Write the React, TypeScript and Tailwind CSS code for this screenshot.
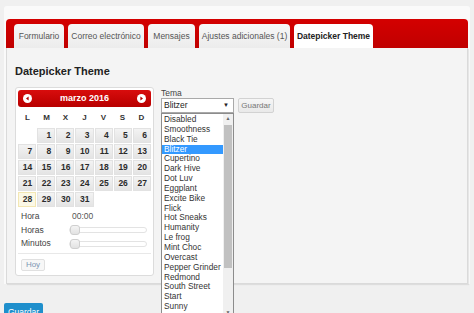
import React from "react";

const TABS = [
  { label: "Formulario", w: "w-[50px]" },
  { label: "Correo electrónico", w: "w-[76px]" },
  { label: "Mensajes", w: "w-[47px]" },
  { label: "Ajustes adicionales (1)", w: "w-[91px]" },
];

const DAY_NAMES = ["L", "M", "X", "J", "V", "S", "D"];

const WEEKS: (number | null)[][] = [
  [null, 1, 2, 3, 4, 5, 6],
  [7, 8, 9, 10, 11, 12, 13],
  [14, 15, 16, 17, 18, 19, 20],
  [21, 22, 23, 24, 25, 26, 27],
  [28, 29, 30, 31, null, null, null],
];

const THEMES = [
  "Disabled",
  "Smoothness",
  "Black Tie",
  "Blitzer",
  "Cupertino",
  "Dark Hive",
  "Dot Luv",
  "Eggplant",
  "Excite Bike",
  "Flick",
  "Hot Sneaks",
  "Humanity",
  "Le frog",
  "Mint Choc",
  "Overcast",
  "Pepper Grinder",
  "Redmond",
  "South Street",
  "Start",
  "Sunny",
];

function CircleArrow({ dir }: { dir: "left" | "right" }) {
  return (
    <svg width="9" height="9" viewBox="0 0 9 9">
      <circle cx="4.5" cy="4.5" r="4.5" fill="#fff" />
      {dir === "left" ? (
        <path d="M5.6 2.4 L3 4.5 L5.6 6.6 Z" fill="#b30000" />
      ) : (
        <path d="M3.4 2.4 L6 4.5 L3.4 6.6 Z" fill="#b30000" />
      )}
    </svg>
  );
}

function Slider() {
  return (
    <div className="relative h-[6px] w-[78px] rounded-[3px] border border-[#e3e3e3] bg-white">
      <span className="absolute left-0 top-[-3px] h-[10px] w-[10px] rounded-[3px] border border-[#cfcfcf] bg-gradient-to-b from-[#f4f4f4] to-[#e2e2e2]" />
    </div>
  );
}

function Calendar() {
  return (
    <div className="w-[139px] rounded-[3px] border border-[#dcdcdc] bg-white p-[2px]">
      <div className="flex h-[17px] items-center justify-between rounded-[3px] bg-gradient-to-b from-[#d80d0d] to-[#b80000] px-[5px]">
        <CircleArrow dir="left" />
        <span className="text-[9px] font-bold text-white">marzo 2016</span>
        <CircleArrow dir="right" />
      </div>
      <div className="grid h-[21px] grid-cols-7 items-center">
        {DAY_NAMES.map((d) => (
          <span key={d} className="text-center text-[8px] font-bold text-[#333]">
            {d}
          </span>
        ))}
      </div>
      <div className="grid grid-cols-7 gap-[1px]">
        {WEEKS.flat().map((d, i) =>
          d === null ? (
            <span key={i} className="h-[15px]" />
          ) : (
            <span
              key={i}
              className={
                d === 28
                  ? "flex h-[15px] items-center justify-end border border-[#f3e7b3] bg-[#fbf8e6] pr-[3px] text-[8.5px] font-bold text-[#333]"
                  : "flex h-[15px] items-center justify-end border border-[#e2e2e2] bg-gradient-to-b from-[#f3f3f3] to-[#e4e4e4] pr-[3px] text-[8.5px] font-bold text-[#2b2b2b]"
              }
            >
              {d}
            </span>
          ),
        )}
      </div>
      <div className="mt-[2px] px-[3px] text-[8.5px] text-[#444]">
        <div className="flex h-[14px] items-center">
          <span className="w-[51px]">Hora</span>
          <span className="text-[#555]">00:00</span>
        </div>
        <div className="flex h-[14px] items-center">
          <span className="w-[48px]">Horas</span>
          <Slider />
        </div>
        <div className="flex h-[13px] items-center">
          <span className="w-[48px]">Minutos</span>
          <Slider />
        </div>
      </div>
      <div className="mt-[3px] border-t border-[#e8e8e8] px-[3px] pb-[2px] pt-[5px]">
        <span className="flex h-[12px] w-[24px] items-center justify-center rounded-[2px] border border-[#e0e0e0] bg-[#f7f7f7] text-[8px] text-[#7d96b4]">
          Hoy
        </span>
      </div>
    </div>
  );
}

function ThemeSelect() {
  return (
    <div className="relative pl-[7px] pt-[1px]">
      <div className="h-[10px] text-[8.5px] leading-[10px] text-[#444]">Tema</div>
      <div className="flex items-center gap-[4px]">
        <div className="flex h-[15px] w-[73px] items-center justify-between border border-[#a9a9a9] bg-white pl-[2px] pr-[4px] text-[8.5px] text-[#222]">
          <span>Blitzer</span>
          <span className="text-[6px] text-[#222]">▼</span>
        </div>
        <div className="flex h-[15px] w-[36px] items-center justify-center rounded-[2px] border border-[#d2d2d2] bg-gradient-to-b from-[#f6f6f6] to-[#e9e9e9] text-[8px] text-[#777]">
          Guardar
        </div>
      </div>
      <div className="absolute left-[7px] top-[26px] flex h-[205px] w-[73px] border border-[#8c8c8c] bg-white">
        <ul className="min-w-0 flex-1 overflow-hidden pt-[1px] text-[8.3px] leading-[9.85px] text-[#333]">
          {THEMES.map((t) => (
            <li
              key={t}
              className={
                t === "Blitzer"
                  ? "whitespace-nowrap bg-[#3399ff] pl-[2px] text-white"
                  : "whitespace-nowrap pl-[2px]"
              }
            >
              {t}
            </li>
          ))}
        </ul>
        <div className="flex w-[10px] shrink-0 flex-col items-center bg-[#f0f0f0]">
          <span className="h-[9px] text-[5px] leading-[9px] text-[#666]">▲</span>
          <span className="mt-[2px] h-[143px] w-[8px] bg-[#c1c1c1]" />
          <span className="flex-1" />
          <span className="h-[9px] text-[5px] leading-[9px] text-[#666]">▼</span>
        </div>
      </div>
    </div>
  );
}

export default function App() {
  return (
    <div className="relative h-[313px] w-[474px] overflow-hidden bg-[#f0f0f0] font-['Liberation_Sans',Arial,sans-serif]">
      <div className="px-[4px] pt-[6px]">
        <div className="rounded-t-[3px] bg-[#fafafa] px-[2px] pt-[13px]">
          <div className="flex h-[29px] items-end gap-[4px] rounded-[4px] rounded-b-none bg-gradient-to-b from-[#d40000] to-[#c00000] px-[8px]">
            {TABS.map((t) => (
              <div
                key={t.label}
                className={`flex h-[24px] ${t.w} items-center justify-center rounded-t-[4px] bg-gradient-to-b from-[#f7f7f7] to-[#ececec] text-[8.5px] text-[#555]`}
              >
                {t.label}
              </div>
            ))}
            <div className="flex h-[24px] w-[79px] items-center justify-center rounded-t-[4px] bg-white text-[8.5px] font-bold text-[#222]">
              Datepicker Theme
            </div>
          </div>
          <div className="h-[236px] border border-t-0 border-[#dadada] bg-[#f4f4f4] px-[8px] pt-[16px] shadow-[1px_1px_1px_rgba(0,0,0,0.08)]">
            <h1 className="h-[23px] text-[11px] font-bold leading-[14px] text-[#222]">Datepicker Theme</h1>
            <div className="flex">
              <Calendar />
              <ThemeSelect />
            </div>
          </div>
        </div>
      </div>
      <div className="absolute left-[4px] top-[303px] flex h-[16px] w-[39px] items-start justify-center rounded-[2px] bg-[#1f8fcc] pt-[3px] text-[8.5px] text-white">
        Guardar
      </div>
    </div>
  );
}
